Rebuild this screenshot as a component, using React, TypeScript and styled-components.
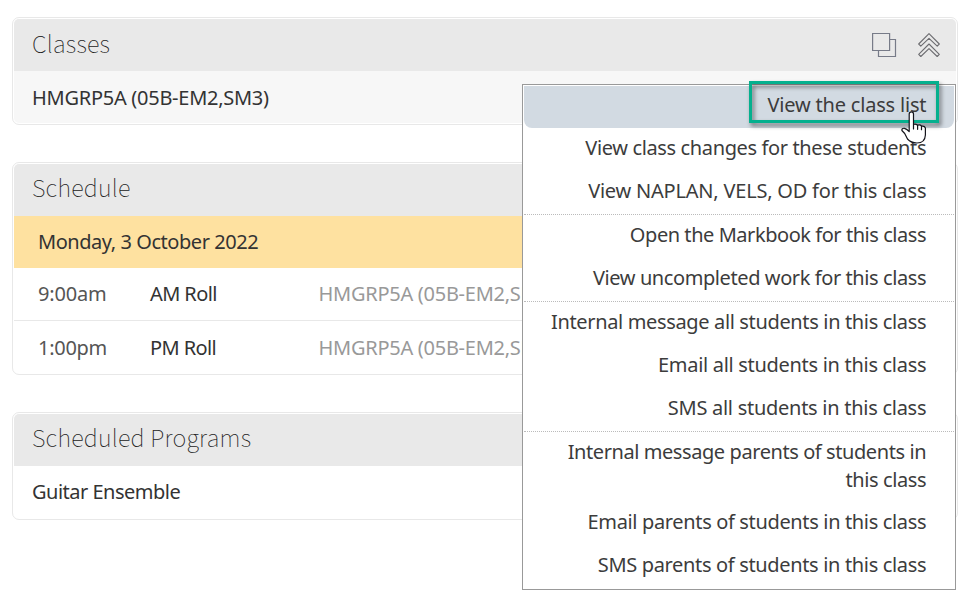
import React from "react";
import styled, { createGlobalStyle } from "styled-components";

const Global = createGlobalStyle`
  * { box-sizing: border-box; }
  body { margin: 0; background: #fff; overflow: hidden; }
`;

const Page = styled.main`
  position: relative;
  width: 961px;
  height: 596px;
  padding: 17px 3px 0 12px;
  display: flex;
  flex-direction: column;
  gap: 37px;
  font: 20px/28px "Noto Sans", Tahoma, sans-serif;
  color: #333;
`;

const Panel = styled.section<{ $tint?: boolean }>`
  border: 1px solid #e8e8e8;
  border-radius: 7px;
  padding: 1px;
  background: ${(p) => (p.$tint ? "#f7f7f7" : "#fff")};
  background-clip: content-box;
`;

const PanelHeader = styled.header`
  height: 52px;
  padding: 0 14px 0 18px;
  display: flex;
  align-items: center;
  background: #e9e9e9;
  border-radius: 5px 5px 0 0;
`;

const Title = styled.h2<{ $lift?: number }>`
  margin: 0;
  padding-bottom: ${(p) => p.$lift ?? 5}px;
  flex: 1;
  font: 100 23.5px/47px "Noto Sans CJK SC", "Source Sans Pro", sans-serif;
  letter-spacing: 0.23px;
  color: #222;
  white-space: nowrap;
`;

const Text = styled.span<{ $spacing?: number; $color?: string }>`
  letter-spacing: ${(p) => p.$spacing ?? 0}px;
  margin-right: ${(p) => -(p.$spacing ?? 0)}px;
  color: ${(p) => p.$color ?? "inherit"};
  white-space: nowrap;
`;

const PanelRow = styled.div<{ $drop?: number }>`
  height: 52px;
  padding: ${(p) => p.$drop ?? 0}px 18px 0;
  display: flex;
  align-items: center;
`;

const DateRow = styled(PanelRow)`
  padding: 0 24px;
  background: #fee1a0;
`;

const ScheduleRow = styled.div`
  height: 52px;
  padding: 0 24px;
  display: grid;
  grid-template-columns: 112px 168.5px 1fr;
  align-items: center;
  & + & {
    height: 53px;
    padding-top: 2px;
    border-top: 1px solid #e8e8e8;
  }
`;

const Menu = styled.nav`
  position: absolute;
  left: 522px;
  top: 84px;
  width: 434px;
  height: 506px;
  padding: 0 1px;
  background: #fff;
  border: 1px solid #999;
  color: #3c3c3c;
`;

const MenuGroup = styled.div`
  & + & { border-top: 1px dotted #bbb; }
`;

const MenuItem = styled.div<{ $active?: boolean; $wrapped?: boolean }>`
  padding: 6px 27.5px ${(p) => (p.$wrapped ? 8 : 9)}px 24px;
  display: flex;
  flex-direction: column;
  align-items: flex-end;
  border-radius: 0 0 8px 8px;
  background: ${(p) => (p.$active ? "#d2dae2" : "transparent")};
  box-shadow: ${(p) => (p.$active ? "inset 0 1px #fff" : "none")};
`;

const Callout = styled.div`
  position: absolute;
  left: 749px;
  top: 81px;
  width: 190px;
  height: 42px;
  border: 3px solid #05b08e;
  filter: drop-shadow(2px 3px 2px rgba(0, 0, 0, 0.5));
`;

const Cursor = styled.svg`
  position: absolute;
  left: 900px;
  top: 109.4px;
`;

const CopyIcon = () => (
  <svg width="26" height="26" viewBox="0 0 26 26" fill="none" stroke="#777b88" strokeWidth="1.2">
    <path d="M6.500 18.500v6h17v-17h-6" />
    <path d="M.6 1.500h17v17h-17z" />
  </svg>
);

const CollapseIcon = () => (
  <svg width="24" height="26" viewBox="0 0 24 26" fill="none" stroke="#6c6c70" strokeWidth="1.1" strokeLinejoin="round">
    <path d="M11 1.700 21.300 12 19.200 14.200 11 6.300 2.800 14.200.7 12z" />
    <path d="M11 12 21.300 22.300 19.200 24.500 11 16.600 2.800 24.500.7 22.300z" />
  </svg>
);

const Tools = styled.div`
  display: flex;
  gap: 20px;
`;

type Label = [string, number];

const groups: Label[][][] = [
  [
    [["View the class list", -0.19]],
    [["View class changes for these students", -0.37]],
    [["View NAPLAN, VELS, OD for this class", -0.21]],
  ],
  [
    [["Open the Markbook for this class", -0.45]],
    [["View uncompleted work for this class", -0.41]],
  ],
  [
    [["Internal message all students in this class", -0.35]],
    [["Email all students in this class", -0.3]],
    [["SMS all students in this class", -0.27]],
  ],
  [
    [["Internal message parents of students in", -0.42], ["this class", -0.4]],
    [["Email parents of students in this class", -0.35]],
    [["SMS parents of students in this class", -0.34]],
  ],
];

const schedule: { time: Label; name: Label }[] = [
  { time: ["9:00am", -0.2], name: ["AM Roll", -0.6] },
  { time: ["1:00pm", -0.28], name: ["PM Roll", -0.6] },
];

export default function App() {
  return (
    <>
      <Global />
      <Page>
        <Panel $tint>
          <PanelHeader>
            <Title $lift={3}>Classes</Title>
            <Tools>
              <CopyIcon />
              <CollapseIcon />
            </Tools>
          </PanelHeader>
          <PanelRow $drop={2}><Text $spacing={-0.27}>HMGRP5A (05B-EM2,SM3)</Text></PanelRow>
        </Panel>
        <Panel>
          <PanelHeader><Title>Schedule</Title></PanelHeader>
          <DateRow><Text $spacing={-0.45}>Monday, 3 October 2022</Text></DateRow>
          {schedule.map(({ time, name }) => (
            <ScheduleRow key={time[0]}>
              <Text $color="#555" $spacing={time[1]}>{time[0]}</Text>
              <Text $spacing={name[1]}>{name[0]}</Text>
              <Text $color="#999" $spacing={-0.27}>HMGRP5A (05B-EM2,SM3)</Text>
            </ScheduleRow>
          ))}
        </Panel>
        <Panel>
          <PanelHeader><Title>Scheduled Programs</Title></PanelHeader>
          <PanelRow><Text $spacing={-0.5}>Guitar Ensemble</Text></PanelRow>
        </Panel>
        <Menu>
          {groups.map((items, g) => (
            <MenuGroup key={g}>
              {items.map((lines, i) => (
                <MenuItem key={i} $active={g === 0 && i === 0} $wrapped={lines.length > 1}>
                  {lines.map(([text, spacing]) => (
                    <Text key={text} $spacing={spacing}>{text}</Text>
                  ))}
                </MenuItem>
              ))}
            </MenuGroup>
          ))}
        </Menu>
        <Callout />
        <Cursor width="28" height="36" viewBox="0 0 28 36" fill="#fff" stroke="#15151c" strokeWidth="1.200" strokeLinejoin="round" strokeLinecap="round">
          <path d="M9.200 22V5Q9.300 2.800 11.400 2.800T13.500 5V15.500Q15.500 14.500 17.600 16.300Q20 15.300 21.500 17.200Q24.500 16.500 25.400 19V26Q25 34 17 34Q11 34 7.500 30L4.700 24.500 1.900 21.500Q1.500 19 4.500 19.300Q6.500 19.800 9.200 22.500Z" />
          <path d="M13.500 15.500v4.500M17.600 16.300v4M21.500 17.200v3.500" />
        </Cursor>
      </Page>
    </>
  );
}
